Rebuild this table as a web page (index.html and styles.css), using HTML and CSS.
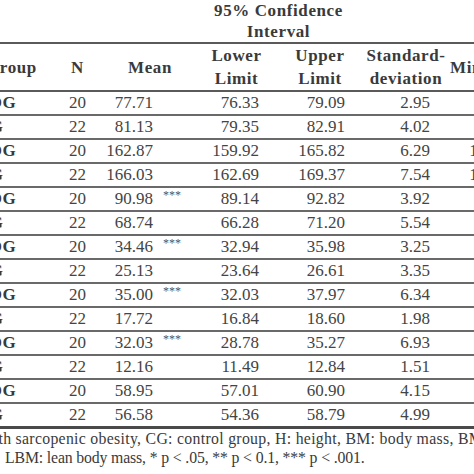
FILE: index.html
```html
<!DOCTYPE html>
<html>
<head>
<meta charset="utf-8">
<link rel="stylesheet" href="styles.css">
</head>
<body>
<div class="page">
  <table class="stats">
    <colgroup>
      <col class="c-group"><col class="c-n"><col class="c-mean"><col class="c-lower"><col class="c-upper"><col class="c-sd"><col class="c-min"><col class="c-max">
    </colgroup>
    <thead>
      <tr class="title-row">
        <th></th><th></th><th></th>
        <th colspan="2" class="ci">95% Confidence<br>Interval</th>
        <th></th><th></th><th></th>
      </tr>
      <tr class="head-row">
        <th class="grp">Group</th>
        <th>N</th>
        <th>Mean</th>
        <th>Lower<br>Limit</th>
        <th>Upper<br>Limit</th>
        <th>Standard-<br>deviation</th>
        <th class="min-h">Minimum</th>
        <th>Maximum</th>
      </tr>
    </thead>
    <tbody>
      <tr><td class="grp sog">SOG</td><td class="n">20</td><td class="mean"><span class="v">77.71</span><span class="s"></span></td><td class="lo">76.33</td><td class="up">79.09</td><td class="sd">2.95</td><td class="mn">72.40</td><td></td></tr>
      <tr><td class="grp cg">CG</td><td class="n">22</td><td class="mean"><span class="v">81.13</span><span class="s"></span></td><td class="lo">79.35</td><td class="up">82.91</td><td class="sd">4.02</td><td class="mn">74.10</td><td></td></tr>
      <tr><td class="grp sog">SOG</td><td class="n">20</td><td class="mean"><span class="v">162.87</span><span class="s"></span></td><td class="lo">159.92</td><td class="up">165.82</td><td class="sd">6.29</td><td class="mn">150.20</td><td></td></tr>
      <tr><td class="grp cg">CG</td><td class="n">22</td><td class="mean"><span class="v">166.03</span><span class="s"></span></td><td class="lo">162.69</td><td class="up">169.37</td><td class="sd">7.54</td><td class="mn">152.30</td><td></td></tr>
      <tr><td class="grp sog">SOG</td><td class="n">20</td><td class="mean"><span class="v">90.98</span><span class="s">***</span></td><td class="lo">89.14</td><td class="up">92.82</td><td class="sd">3.92</td><td class="mn">84.50</td><td></td></tr>
      <tr><td class="grp cg">CG</td><td class="n">22</td><td class="mean"><span class="v">68.74</span><span class="s"></span></td><td class="lo">66.28</td><td class="up">71.20</td><td class="sd">5.54</td><td class="mn">58.60</td><td></td></tr>
      <tr><td class="grp sog">SOG</td><td class="n">20</td><td class="mean"><span class="v">34.46</span><span class="s">***</span></td><td class="lo">32.94</td><td class="up">35.98</td><td class="sd">3.25</td><td class="mn">29.10</td><td></td></tr>
      <tr><td class="grp cg">CG</td><td class="n">22</td><td class="mean"><span class="v">25.13</span><span class="s"></span></td><td class="lo">23.64</td><td class="up">26.61</td><td class="sd">3.35</td><td class="mn">19.80</td><td></td></tr>
      <tr><td class="grp sog">SOG</td><td class="n">20</td><td class="mean"><span class="v">35.00</span><span class="s">***</span></td><td class="lo">32.03</td><td class="up">37.97</td><td class="sd">6.34</td><td class="mn">25.30</td><td></td></tr>
      <tr><td class="grp cg">CG</td><td class="n">22</td><td class="mean"><span class="v">17.72</span><span class="s"></span></td><td class="lo">16.84</td><td class="up">18.60</td><td class="sd">1.98</td><td class="mn">14.20</td><td></td></tr>
      <tr><td class="grp sog">SOG</td><td class="n">20</td><td class="mean"><span class="v">32.03</span><span class="s">***</span></td><td class="lo">28.78</td><td class="up">35.27</td><td class="sd">6.93</td><td class="mn">21.40</td><td></td></tr>
      <tr><td class="grp cg">CG</td><td class="n">22</td><td class="mean"><span class="v">12.16</span><span class="s"></span></td><td class="lo">11.49</td><td class="up">12.84</td><td class="sd">1.51</td><td class="mn">9.80</td><td></td></tr>
      <tr><td class="grp sog">SOG</td><td class="n">20</td><td class="mean"><span class="v">58.95</span><span class="s"></span></td><td class="lo">57.01</td><td class="up">60.90</td><td class="sd">4.15</td><td class="mn">51.90</td><td></td></tr>
      <tr class="last"><td class="grp cg">CG</td><td class="n">22</td><td class="mean"><span class="v">56.58</span><span class="s"></span></td><td class="lo">54.36</td><td class="up">58.79</td><td class="sd">4.99</td><td class="mn">48.70</td><td></td></tr>
    </tbody>
  </table>
  <div class="notes">
    <p class="note note1">SOG: group with sarcopenic obesity, CG: control group, H: height, BM: body mass, BMI: body mass index,</p>
    <p class="note note2">LBM: lean body mass, * p &lt; .05, ** p &lt; 0.1, *** p &lt; .001.</p>
  </div>
</div>
</body>
</html>
```
FILE: styles.css
```css
html, body {
  margin: 0;
  padding: 0;
  background: #ffffff;
}
body {
  width: 474px;
  height: 474px;
  overflow: hidden;
  font-family: "Liberation Serif", "Times New Roman", serif;
  color: #444444;
}
.page {
  width: 640px;
  margin-left: -50px;
}
.stats {
  border-collapse: separate;
  border-spacing: 0;
  table-layout: fixed;
  width: 660px;
  font-size: 17px;
}
.c-group { width: 100px; }
.c-n { width: 55px; }
.c-mean { width: 90px; }
.c-lower { width: 83px; }
.c-upper { width: 84px; }
.c-sd { width: 88px; }
.c-min { width: 80px; }
.c-max { width: 80px; }

th {
  font-weight: bold;
  color: #3a3a3a;
  padding: 0;
  text-align: center;
  white-space: nowrap;
  letter-spacing: 0.6px;
}
.title-row th {
  height: 40px;
  line-height: 21px;
  vertical-align: top;
}
.head-row th {
  height: 46px;
  line-height: 23px;
  vertical-align: middle;
  border-top: 2px solid #5a5a5a;
  border-bottom: 2px solid #5a5a5a;
}
.head-row .grp {
  text-align: left;
  padding-left: 36px;
}
.head-row .min-h {
  text-align: left;
  padding-left: 0;
}

td {
  padding: 0;
  line-height: 22px;
  height: 22px;
  border-bottom: 2px solid #6a6a6a;
  white-space: nowrap;
  vertical-align: middle;
}
tr.last td {
  border-bottom: 3px solid #4a4a4a;
}
td.grp {
  font-weight: bold;
  color: #3a3a3a;
  text-align: left;
  letter-spacing: 0.4px;
}
td.sog { padding-left: 29px; }
td.cg { padding-left: 27px; }
td.n { text-align: center; }
td.mean { text-align: left; }
.mean .v {
  display: inline-block;
  width: 48px;
  text-align: right;
}
.mean .s {
  display: inline-block;
  margin-left: 10px;
  font-size: 12px;
  line-height: 11px;
  vertical-align: 5px;
  color: #555555;
}
td.lo { text-align: right; padding-right: 19px; }
td.up { text-align: right; padding-right: 17px; }
td.sd { text-align: right; padding-right: 20px; }
td.mn { text-align: right; padding-right: 14px; }

.note {
  margin: 0;
  font-size: 15.8px;
  line-height: 19px;
  color: #3a3a3a;
  white-space: nowrap;
}
.note1 {
  margin-left: -52px;
  letter-spacing: 0.3px;
}
.note2 {
  margin-left: 55px;
  letter-spacing: -0.15px;
}
```
